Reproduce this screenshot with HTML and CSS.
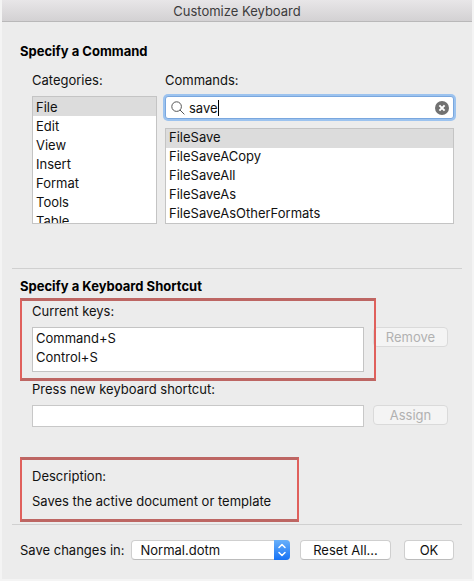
FILE: index.html
```html
<!DOCTYPE html>
<html lang="en">
<head>
<meta charset="utf-8">
<meta name="viewport" content="width=device-width, initial-scale=1">
<title>Customize Keyboard</title>
<link rel="stylesheet" href="styles.css">
</head>
<body>
<form class="dialog">
  <header class="titlebar">Customize Keyboard</header>

  <section class="section">
    <h2 class="heading">Specify a Command</h2>
    <div class="command-grid">
      <div class="column">
        <label for="categories">Categories:</label>
        <select class="listbox categories" id="categories" size="7">
          <option selected>File</option>
          <option>Edit</option>
          <option>View</option>
          <option>Insert</option>
          <option>Format</option>
          <option>Tools</option>
          <option>Table</option>
        </select>
      </div>
      <div class="column">
        <label for="search">Commands:</label>
        <div class="search">
          <svg class="search-icon" viewBox="0 0 14 14" aria-hidden="true"><circle cx="5.6" cy="5.6" r="4.8"/><path d="M9 9l4.4 4.4"/></svg>
          <input class="search-input" id="search" type="text" value="save">
          <span class="caret"></span>
          <button class="clear" type="button" aria-label="Clear">
            <svg viewBox="0 0 14 14" aria-hidden="true"><circle cx="7" cy="7" r="7"/><path d="M4.4 4.4l5.2 5.2M9.6 4.4L4.4 9.6"/></svg>
          </button>
        </div>
        <select class="listbox commands" size="5" aria-label="Commands">
          <option selected>FileSave</option>
          <option>FileSaveACopy</option>
          <option>FileSaveAll</option>
          <option>FileSaveAs</option>
          <option>FileSaveAsOtherFormats</option>
        </select>
      </div>
    </div>
  </section>

  <hr class="divider">

  <section class="section shortcut">
    <h2 class="heading">Specify a Keyboard Shortcut</h2>
    <div class="key-row current">
      <div class="column marked">
        <label for="current">Current keys:</label>
        <select class="listbox keys" id="current" size="2">
          <option>Command+S</option>
          <option>Control+S</option>
        </select>
      </div>
      <button class="button" type="button" disabled>Remove</button>
    </div>
    <div class="key-row">
      <div class="column">
        <label for="newkey">Press new keyboard shortcut:</label>
        <input class="field" id="newkey" type="text">
      </div>
      <button class="button" type="button" disabled>Assign</button>
    </div>
    <div class="description marked">
      <p>Description:</p>
      <p>Saves the active document or template</p>
    </div>
  </section>

  <hr class="divider">

  <footer class="footer">
    <label for="target">Save changes in:</label>
    <div class="popup">
      <select class="popup-select" id="target"><option>Normal.dotm</option></select>
      <svg class="popup-arrows" viewBox="0 0 16 20" aria-hidden="true"><path d="M5 7.5l3-3 3 3M5 12.5l3 3 3-3"/></svg>
    </div>
    <button class="button reset" type="button">Reset All...</button>
    <button class="button ok" type="button">OK</button>
  </footer>
</form>
</body>
</html>
```

FILE: styles.css
```css
* {
  box-sizing: border-box;
}

body {
  margin: 0;
  background: #ececec;
  color: #111;
  font: 13px/18px Inter, "Liberation Sans", sans-serif;
}

input,
select,
button {
  margin: 0;
  color: inherit;
  font: inherit;
}

h2,
p {
  margin: 0;
}

.dialog {
  min-height: 100vh;
  border: solid #f4f4f4;
  border-width: 0 2px 2px;
}

.titlebar {
  height: 22px;
  border-bottom: 1px solid #b9b8b9;
  background: linear-gradient(#e8e6e8, #d3d1d3);
  color: #3c3b3c;
  line-height: 22px;
  text-align: center;
}

.section {
  padding: 20px 18px 44px;
}

.heading {
  color: #000;
  font-size: 13px;
  font-weight: 700;
  line-height: 18px;
}

.command-grid {
  display: grid;
  grid-template-columns: 125px 1fr;
  gap: 8px;
  margin-top: 11px;
  padding-left: 12px;
}

.column {
  display: flex;
  flex-direction: column;
  gap: 7px;
  min-width: 0;
}

.listbox {
  width: 100%;
  padding: 0;
  overflow: hidden;
  border: 1px solid #c4c4c4;
  border-radius: 0;
  outline: 0;
  background: #fff;
  scrollbar-width: none;
}

.listbox option {
  min-height: 19px;
  padding: 0 3px;
  color: #111;
  line-height: 19px;
}

.listbox option:checked {
  background: linear-gradient(#dcdcdc, #dcdcdc);
}

.categories {
  height: 128px;
}

.categories option {
  padding-top: 2px;
  line-height: 17px;
}

.commands {
  height: 96px;
  margin-top: 2px;
}

.search {
  display: flex;
  align-items: center;
  height: 23px;
  padding: 0 4px 0 5px;
  border: 1px solid #7aa7de;
  border-radius: 3px;
  background: #fff;
  box-shadow: 0 0 0 2px #9cc3ef;
}

.search-icon {
  width: 14px;
  height: 14px;
  margin-right: 4px;
  fill: none;
  stroke: #555;
}

.search-input {
  field-sizing: content;
  padding: 0;
  border: 0;
  outline: 0;
  background: none;
}

.caret {
  width: 1px;
  height: 16px;
  background: #000;
}

.clear {
  width: 14px;
  height: 14px;
  margin-left: auto;
  padding: 0;
  border: 0;
  background: none;
}

.clear svg {
  display: block;
  fill: #717171;
}

.clear path {
  stroke: #fff;
  stroke-width: 2;
}

.divider {
  height: 1px;
  margin: 0 10px;
  border: 0;
  background: #d0d0d0;
}

.shortcut {
  padding: 8px 24px 14px 18px;
}

.key-row {
  display: grid;
  grid-template-columns: 1fr 75px;
  gap: 9px;
  margin-top: 8px;
  padding-left: 12px;
}

.key-row.current {
  margin-top: 7px;
}

.key-row .button {
  margin-top: 25px;
}

.keys {
  height: 45px;
  padding-top: 2px;
}

.field {
  width: 100%;
  height: 22px;
  padding: 0 3px;
  border: 1px solid #c8c8c8;
  background: #fff;
}

.marked {
  position: relative;
}

.marked::after {
  position: absolute;
  inset: -4px -12px -9px;
  border: solid #e0605c;
  border-width: 3px 2px;
  border-top-color: #bd6663;
  border-bottom-color: #bd6663;
  content: "";
  pointer-events: none;
}

.description {
  display: flex;
  flex-direction: column;
  gap: 7px;
  width: fit-content;
  margin: 40px 0 0 12px;
}

.description.marked::after {
  inset: -10px -28px -12px -12px;
}

.button {
  height: 20px;
  padding: 0;
  border: 1px solid #cfcfcf;
  border-bottom-color: #bcbcbc;
  border-radius: 4px;
  background: #fff;
  line-height: 18px;
}

.button:disabled {
  border-color: #dadada;
  background: #f4f4f4;
  color: #b1b1b1;
}

.footer {
  display: flex;
  align-items: center;
  padding: 15px 18px 18px;
}

.popup {
  position: relative;
  flex: 1;
  margin: 0 10px 0 7px;
}

.popup-select {
  display: block;
  width: 100%;
  height: 20px;
  padding: 0 24px 0 8px;
  border: 1px solid #cfcfcf;
  border-bottom-color: #bcbcbc;
  border-radius: 4px;
  appearance: none;
  background: #fff;
}

.popup-arrows {
  position: absolute;
  top: 0;
  right: 0;
  width: 16px;
  height: 20px;
  border-radius: 0 4px 4px 0;
  background: linear-gradient(#68b0fa, #1672f5);
  fill: none;
  stroke: #fff;
  stroke-linecap: round;
  stroke-linejoin: round;
  stroke-width: 1.5;
  pointer-events: none;
}

.reset {
  width: 91px;
}

.ok {
  width: 50px;
  margin-left: 13px;
}
```
